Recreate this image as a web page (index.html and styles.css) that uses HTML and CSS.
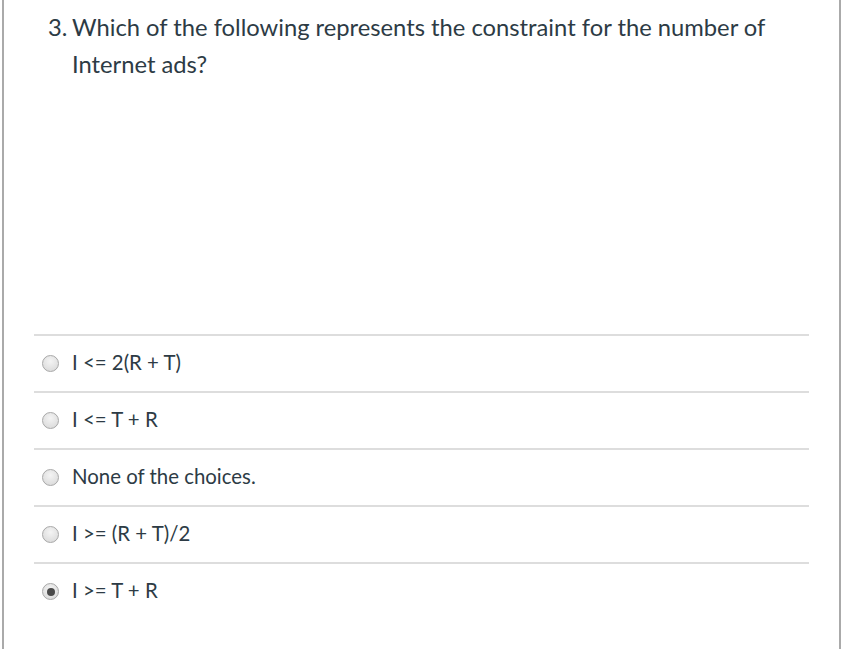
FILE: index.html
```html
<!DOCTYPE html>
<html>
<head>
<meta charset="utf-8">
<link rel="stylesheet" href="styles.css">
</head>
<body>
<div class="card">
  <div class="question">
    <span class="num">3.</span>
    <span class="qtext">Which of the following represents the constraint for the number of Internet ads?</span>
  </div>
  <ul class="options">
    <li class="option"><span class="radio"></span><span class="label">I &lt;= 2(R + T)</span></li>
    <li class="option"><span class="radio"></span><span class="label">I &lt;= T + R</span></li>
    <li class="option"><span class="radio"></span><span class="label">None of the choices.</span></li>
    <li class="option"><span class="radio"></span><span class="label">I &gt;= (R + T)/2</span></li>
    <li class="option"><span class="radio checked"></span><span class="label">I &gt;= T + R</span></li>
  </ul>
</div>
</body>
</html>
```

FILE: styles.css
```css
html, body {
  margin: 0;
  padding: 0;
  background: #fff;
  overflow: hidden;
}
body {
  font-family: Lato, "Open Sans", sans-serif;
  color: #2d3b45;
}
.card {
  margin-left: 2px;
  width: 835px;
  height: 700px;
  border-left: 2px solid #aaa;
  border-right: 2px solid #aaa;
  box-sizing: content-box;
}
.question {
  display: flex;
  padding: 9px 50px 0 44px;
  font-size: 23.75px;
  line-height: 37px;
  height: 325px;
}
.num {
  flex: 0 0 24px;
  word-spacing: -2px;
}
.qtext {
  flex: 1;
}
.options {
  list-style: none;
  margin: 0 30px 0 30px;
  padding: 0;
}
.option {
  display: flex;
  align-items: center;
  padding-bottom: 3px;
  box-sizing: content-box;
  height: 52px;
  border-top: 2px solid #ddd;
  font-size: 20.4px;
}
.radio {
  width: 17px;
  height: 17px;
  border-radius: 50%;
  border: 1px solid #a8a8a8;
  background: radial-gradient(circle at 50% 35%, #f4f4f4 0%, #d6d6d6 100%);
  margin-left: 8px;
  margin-right: 13px;
  margin-top: 3px;
  box-sizing: border-box;
  position: relative;
}
.radio.checked::after {
  content: "";
  position: absolute;
  left: 3.5px;
  top: 3.5px;
  width: 8px;
  height: 8px;
  border-radius: 50%;
  background: #4a4a4a;
}
```
